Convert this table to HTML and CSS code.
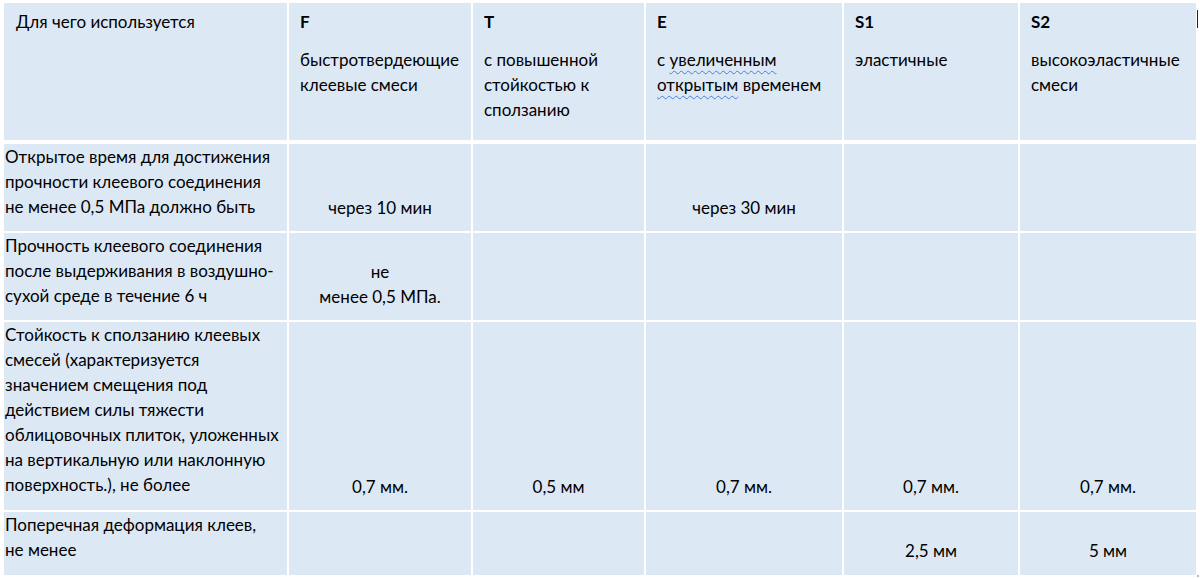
FILE: index.html
```html
<!DOCTYPE html>
<html lang="ru">
<head>
<meta charset="utf-8">
<title>Классы клеевых смесей</title>
<link rel="stylesheet" href="styles.css">
</head>
<body>
<div class="page">
<table class="grid">
  <colgroup>
    <col class="c1"><col class="c2"><col class="c3"><col class="c4"><col class="c5"><col class="c6">
  </colgroup>
  <thead>
    <tr class="head">
      <th class="lead">Для чего используется</th>
      <th><div class="code">F</div><div class="desc">быстротвердеющие<br>клеевые смеси</div></th>
      <th><div class="code">T</div><div class="desc">с повышенной<br>стойкостью к<br>сползанию</div></th>
      <th><div class="code">E</div><div class="desc">с <span class="spell">увеличенным</span><br><span class="spell">открытым</span> временем</div></th>
      <th><div class="code">S1</div><div class="desc">эластичные</div></th>
      <th><div class="code">S2</div><div class="desc">высокоэластичные<br>смеси</div></th>
    </tr>
  </thead>
  <tbody>
    <tr class="r1">
      <td class="param">Открытое время для достижения<br>прочности клеевого соединения<br>не менее 0,5 МПа должно быть</td>
      <td class="val">через 10 мин</td>
      <td class="val"></td>
      <td class="val">через 30 мин</td>
      <td class="val"></td>
      <td class="val"></td>
    </tr>
    <tr class="r2">
      <td class="param">Прочность клеевого соединения<br>после выдерживания в воздушно-<br>сухой среде в течение 6 ч</td>
      <td class="val">не<br>менее 0,5 МПа.</td>
      <td class="val"></td>
      <td class="val"></td>
      <td class="val"></td>
      <td class="val"></td>
    </tr>
    <tr class="r3">
      <td class="param">Стойкость к сползанию клеевых<br>смесей (характеризуется<br>значением смещения под<br>действием силы тяжести<br>облицовочных плиток, уложенных<br>на вертикальную или наклонную<br>поверхность.), не более</td>
      <td class="val">0,7 мм.</td>
      <td class="val">0,5 мм</td>
      <td class="val">0,7 мм.</td>
      <td class="val">0,7 мм.</td>
      <td class="val">0,7 мм.</td>
    </tr>
    <tr class="r4">
      <td class="param">Поперечная деформация клеев,<br>не менее</td>
      <td class="val"></td>
      <td class="val"></td>
      <td class="val"></td>
      <td class="val">2,5 мм</td>
      <td class="val">5 мм</td>
    </tr>
  </tbody>
</table>
<span class="caret"></span>
<span class="grip"></span>
</div>
</body>
</html>
```

FILE: styles.css
```css
html, body {
  margin: 0;
  padding: 0;
  background: #ffffff;
}

.page {
  position: relative;
  width: 1200px;
  height: 579px;
  overflow: hidden;
  font-family: Lato, "Noto Sans", "DejaVu Sans", sans-serif;
  font-size: 17px;
  line-height: 25px;
  color: #000000;
}

.grid {
  margin: 1px 0 0 2px;
  width: 1196px;
  table-layout: fixed;
  border-collapse: separate;
  border-spacing: 2px;
}

.c1 { width: 283px; }
.c2 { width: 182px; }
.c3 { width: 171px; }
.c4 { width: 196px; }
.c5 { width: 174px; }
.c6 { width: 176px; }

.grid th,
.grid td {
  background: #dde8f5;
  padding: 0;
  white-space: nowrap;
  overflow: visible;
}

.head { height: 139px; }

.grid .head th {
  font-weight: 400;
  text-align: left;
  vertical-align: top;
  padding: 6px 0 0 11px;
  border-bottom: 2px solid #ffffff;
}

.grid .head th.lead {
  padding-left: 12px;
}

.code {
  font-weight: 700;
}

.desc {
  margin-top: 13px;
}

.spell {
  text-decoration: underline wavy #4a7fd6;
  text-decoration-thickness: 1px;
  text-underline-offset: 4px;
}

.r1 { height: 87px; }
.r2 { height: 87px; }
.r3 { height: 188px; }
.r4 { height: 63px; }

.grid .param {
  vertical-align: top;
  text-align: left;
  padding: 0 0 0 1px;
}

.grid .val {
  vertical-align: bottom;
  text-align: center;
  padding: 0 0 11px 0;
}

.grid .r4 .val {
  padding-bottom: 12px;
}

.caret {
  position: absolute;
  left: 1197px;
  top: 10px;
  width: 1px;
  height: 18px;
  background: #222222;
}

.grip {
  position: absolute;
  left: 1197px;
  top: 575px;
  width: 2px;
  height: 2px;
  background: #b8b8b8;
}
```
